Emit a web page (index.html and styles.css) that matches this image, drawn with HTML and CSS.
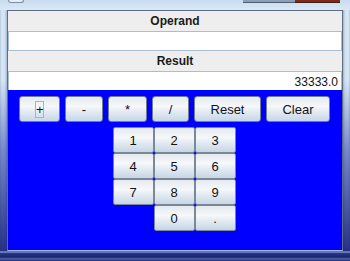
FILE: index.html
```html
<!DOCTYPE html>
<html>
<head>
<meta charset="utf-8">
<link rel="stylesheet" href="styles.css">
</head>
<body>
<div class="window">
  <div class="titlebar">
    <span class="sysicon"></span>
    <span class="spacer"></span>
    <span class="maxbtn"></span>
    <span class="closebtn"></span>
  </div>
  <div class="middle">
    <div class="edge left"></div>
    <div class="client">
      <div class="label">Operand</div>
      <div class="field"></div>
      <div class="label">Result</div>
      <div class="field result">33333.0</div>
      <div class="panel">
        <div class="ops">
          <button class="btn w-plus"><span class="focus">+</span></button>
          <button class="btn w-minus">-</button>
          <button class="btn w-mul">*</button>
          <button class="btn w-div">/</button>
          <button class="btn w-reset">Reset</button>
          <button class="btn w-clear">Clear</button>
        </div>
        <div class="pad">
          <button class="btn key">1</button>
          <button class="btn key">2</button>
          <button class="btn key">3</button>
          <button class="btn key">4</button>
          <button class="btn key">5</button>
          <button class="btn key">6</button>
          <button class="btn key">7</button>
          <button class="btn key">8</button>
          <button class="btn key">9</button>
          <span class="blank"></span>
          <button class="btn key">0</button>
          <button class="btn key">.</button>
        </div>
      </div>
    </div>
    <div class="edge right"></div>
  </div>
  <div class="bottom"></div>
</div>
</body>
</html>
```

FILE: styles.css
```css
html, body {
  margin: 0;
  padding: 0;
}
body {
  width: 350px;
  height: 261px;
  overflow: hidden;
  font-family: "Liberation Sans", Arial, sans-serif;
}
.window {
  width: 350px;
  height: 261px;
  display: flex;
  flex-direction: column;
  background: #d0e2f4;
}
.titlebar {
  height: 10px;
  display: flex;
  align-items: flex-start;
  background: linear-gradient(#c9dcf0, #d9e8f6);
}
.sysicon {
  margin-left: 8px;
  width: 16px;
  height: 3px;
  border: 1px solid #7a8ea4;
  border-top: none;
  border-radius: 0 0 3px 3px;
  background: #e4edf6;
  box-sizing: border-box;
}
.spacer {
  flex: 1;
}
.maxbtn {
  width: 52px;
  height: 2px;
  background: #8d9fb3;
  border-bottom: 1px solid #4f5f72;
}
.closebtn {
  width: 45px;
  height: 2px;
  background: #7b2a1c;
  border-bottom: 1px solid #4a1a12;
  margin-right: 10px;
}
.middle {
  display: flex;
  height: 241px;
}
.edge {
  width: 7px;
}
.edge.left {
  background-image:
    linear-gradient(180deg, rgba(0,0,0,0) 0, rgba(0,0,0,0) 70px, rgba(40,60,170,0.55) 140px, rgba(20,30,120,0.9) 241px),
    linear-gradient(90deg, #b8cbe0 0, #dbe8f5 2px, #cfe0f1 5px, #9fb4cb 7px);
}
.edge.right {
  background-image:
    linear-gradient(180deg, rgba(0,0,0,0) 0, rgba(0,0,0,0) 70px, rgba(40,60,170,0.55) 140px, rgba(20,30,120,0.9) 241px),
    linear-gradient(90deg, #9fb4cb 0, #cfe0f1 2px, #dbe8f5 5px, #b8cbe0 7px);
}
.client {
  width: 336px;
  border: 1px solid #5f6f80;
  border-bottom: 1px solid #a6b6e6;
  box-sizing: border-box;
  display: flex;
  flex-direction: column;
  background: #eeeeee;
}
.label {
  height: 20px;
  line-height: 20px;
  text-align: center;
  font-weight: bold;
  font-size: 12px;
  color: #1a1a1a;
  background: #eeeeee;
}
.field {
  height: 20px;
  box-sizing: border-box;
  border: 1px solid #a9bed5;
  background: #ffffff;
  font-size: 12px;
  line-height: 18px;
  color: #111111;
  padding: 0 3px;
}
.field.result {
  height: 19px;
  line-height: 19px;
  border-bottom: none;
  text-align: right;
  padding-top: 1px;
  padding-right: 3px;
}
.panel {
  flex: 1;
  background: #0000ff;
  display: flex;
  flex-direction: column;
  align-items: center;
  padding-top: 6px;
  padding-right: 1px;
}
.ops {
  display: flex;
  gap: 5px;
  height: 26px;
}
.btn {
  margin: 0;
  padding: 0;
  height: 26px;
  box-sizing: border-box;
  border: 1px solid #707f90;
  border-radius: 3px;
  background: linear-gradient(180deg, #e4eaf0 0%, #f6f8fa 40%, #e8eef4 55%, #c6d6e6 100%);
  font-family: "Liberation Sans", Arial, sans-serif;
  font-size: 13px;
  color: #111116;
  display: flex;
  align-items: center;
  justify-content: center;
}
.w-plus { width: 41px; }
.w-minus { width: 38px; }
.w-mul { width: 39px; }
.w-div { width: 37px; }
.w-reset { width: 67px; }
.w-clear { width: 64px; }
.focus {
  display: inline-block;
  width: 9px;
  height: 17px;
  line-height: 15px;
  box-sizing: border-box;
  border: 1px solid #a8b4c4;
  text-align: center;
}
.pad {
  margin-top: 5px;
  margin-right: 1px;
  display: grid;
  grid-template-columns: repeat(3, 41px);
  grid-template-rows: repeat(4, 26px);
}
.key {
  width: 41px;
  border-radius: 2px;
  border-color: #7b8896;
}
.bottom {
  height: 10px;
  background: linear-gradient(180deg, #2a3aa0 0, #9fb0e0 1px, #2a3a90 2px, #18246e 6px, #5466a8 8px, #1a2870 10px);
}
```
